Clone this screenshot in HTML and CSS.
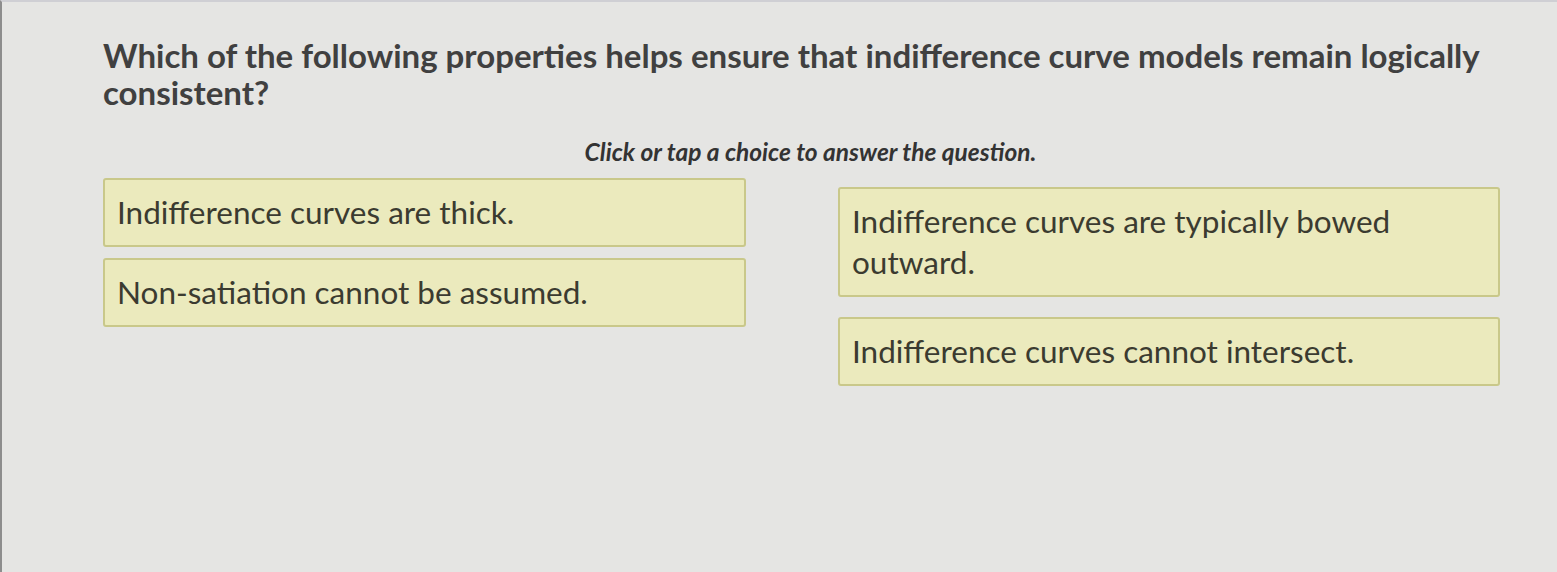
FILE: index.html
```html
<!DOCTYPE html>
<html lang="en">
<head>
    <meta charset="UTF-8">
    <meta name="viewport" content="width=device-width, initial-scale=1.0">
    <title>Question</title>
    <link rel="stylesheet" href="styles.css">
</head>
<body>

<div class="page">
    <h1 class="question">Which of the following properties helps ensure that indifference curve models remain logically consistent?</h1>

    <p class="hint">Click or tap a choice to answer the question.</p>

    <div class="choices">
        <!-- Kolom kiri -->
        <div class="choice-col">
            <button class="choice">Indifference curves are thick.</button>
            <button class="choice">Non-satiation cannot be assumed.</button>
        </div>

        <!-- Kolom kanan -->
        <div class="choice-col right">
            <button class="choice">Indifference curves are typically bowed outward.</button>
            <button class="choice">Indifference curves cannot intersect.</button>
        </div>
    </div>
</div>

</body>
</html>
```

FILE: styles.css
```css
* {
    padding: 0;
    margin: 0;
    box-sizing: border-box;
}

body {
    font-family: Lato, "Open Sans", sans-serif;
    background-color: #e5e5e3;
    color: #3a3a3a;
    height: 572px;
    overflow: hidden;
    border-left: 2px solid #8d8d8d;
    border-top: 2px solid #cfcfd4;
}

.page {
    padding: 35px 55px 0 101px;
}

.question {
    font-size: 33px;
    font-weight: 700;
    line-height: 37px;
    color: #404040;
    padding-right: 20px;
}

.hint {
    text-align: center;
    font-size: 24.5px;
    font-weight: 700;
    font-style: italic;
    line-height: 29px;
    color: #333;
    margin-top: 26px;
    margin-bottom: 12px;
    padding-left: 16px;
}

.choices {
    display: grid;
    grid-template-columns: 643px 662px;
    column-gap: 92px;
}

.choice-col {
    display: flex;
    flex-direction: column;
    gap: 11px;
}

.choice-col.right {
    margin-top: 9px;
    gap: 20px;
}

.choice {
    display: block;
    width: 100%;
    text-align: left;
    font-family: inherit;
    font-size: 31.5px;
    line-height: 41px;
    color: #3b3b30;
    background-color: #ebeabd;
    border: 2px solid #c9c88a;
    border-radius: 3px;
    padding: 12px 12px;
    cursor: pointer;
}

.choice:hover {
    background-color: #e4e3ae;
}
```
